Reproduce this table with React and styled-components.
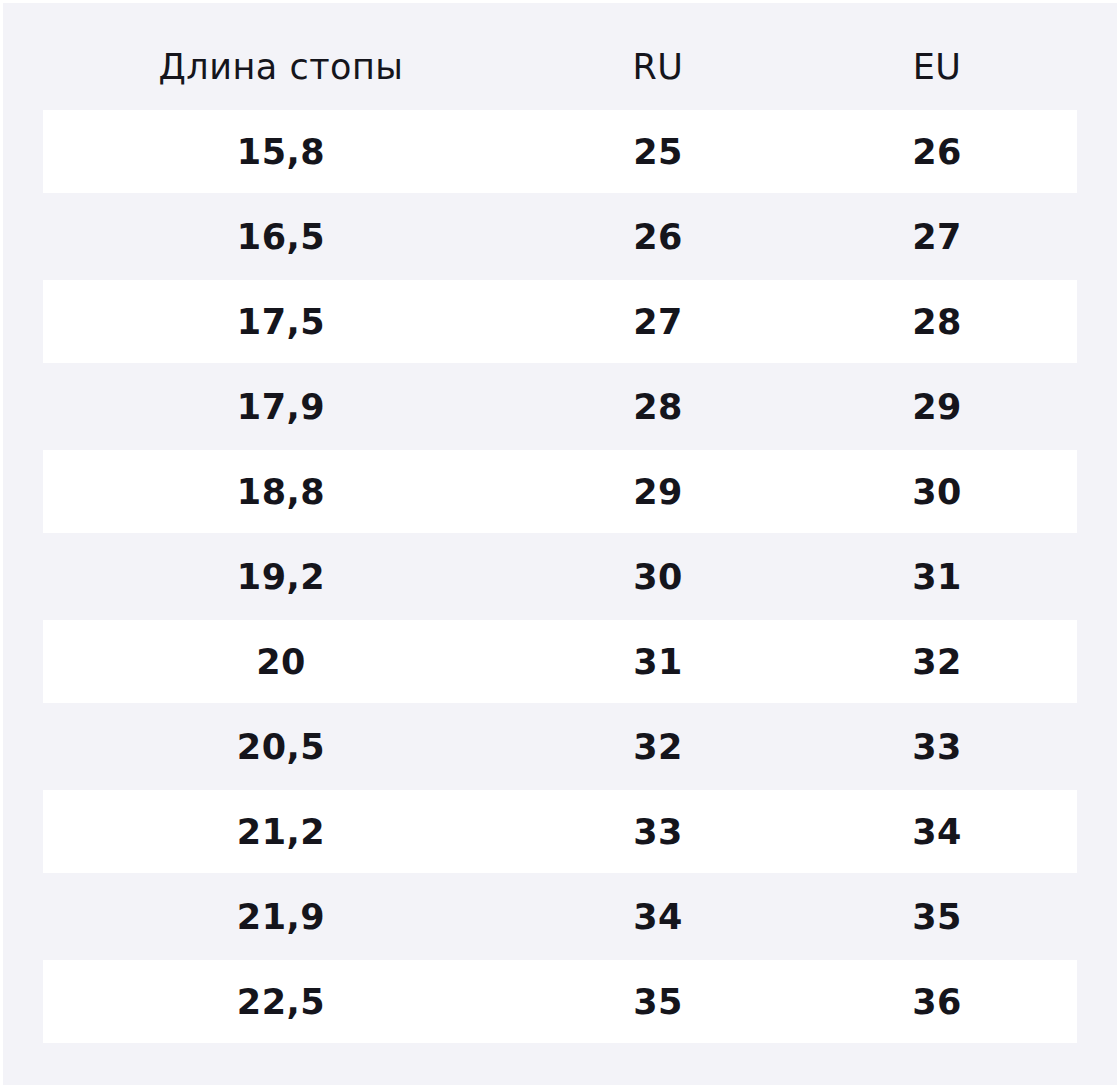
import React from "react";
import styled, { createGlobalStyle } from "styled-components";

const GlobalStyle = createGlobalStyle`
  body {
    margin: 3px;
    background: #fff;
    font-family: "DejaVu Sans", Verdana, sans-serif;
    color: #15151c;
  }
`;

const Panel = styled.section`
  background: #f3f3f8;
  padding: 20px 40px 40px;
  height: 1082px;
  box-sizing: border-box;
`;

const Table = styled.div`
  display: grid;
  grid-template-columns: 476px 278px 1fr;
  grid-auto-rows: 83px;
  row-gap: 2px;
  padding: 2px 0;
`;

const Row = styled.div`
  display: contents;
`;

const Cell = styled.div`
  display: flex;
  align-items: center;
  justify-content: center;
  background: ${({ $white }) => ($white ? "#fff" : "transparent")};
  font-size: 35px;
  font-weight: ${({ $head }) => ($head ? 400 : 700)};
  letter-spacing: ${({ $head }) => ($head ? "0.5px" : "0.5px")};
`;

// размеры: длина стопы, RU, EU
const sizes = [
  ["15,8", "25", "26"],
  ["16,5", "26", "27"],
  ["17,5", "27", "28"],
  ["17,9", "28", "29"],
  ["18,8", "29", "30"],
  ["19,2", "30", "31"],
  ["20", "31", "32"],
  ["20,5", "32", "33"],
  ["21,2", "33", "34"],
  ["21,9", "34", "35"],
  ["22,5", "35", "36"]
];

const App = () => (
  <>
    <GlobalStyle />
    <Panel>
      <Table>
        <Row>
          <Cell $head>Длина стопы</Cell>
          <Cell $head>RU</Cell>
          <Cell $head>EU</Cell>
        </Row>
        {sizes.map((row, i) => (
          <Row key={row[0]}>
            {row.map((value, j) => (
              <Cell key={j} $white={i % 2 === 0}>
                {value}
              </Cell>
            ))}
          </Row>
        ))}
      </Table>
    </Panel>
  </>
);

export default App;
